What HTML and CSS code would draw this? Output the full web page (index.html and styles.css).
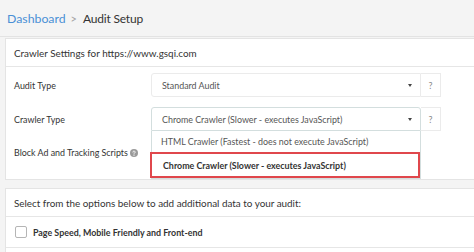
FILE: index.html
```html
<!DOCTYPE html>
<html lang="en">
<head>
    <meta charset="UTF-8">
    <meta name="viewport" content="width=device-width, initial-scale=1.0">
    <title>Audit Setup</title>
    <link rel="stylesheet" href="styles.css">
</head>
<body>
    <div class="topbar">
        <a class="crumb-link" href="#">Dashboard</a>
        <span class="crumb-sep">&gt;</span>
        <span class="crumb-current">Audit Setup</span>
    </div>

    <div class="content">

        <!-- Crawler settings -->
        <div class="panel">
            <div class="panel-heading">Crawler Settings for https://www.gsqi.com</div>
            <div class="panel-body">
                <div class="form-row">
                    <div class="form-label">Audit Type</div>
                    <div class="input-group">
                        <div class="select">Standard Audit<span class="caret"></span></div>
                        <div class="addon">?</div>
                    </div>
                </div>

                <div class="form-row">
                    <div class="form-label">Crawler Type</div>
                    <div class="input-group">
                        <div class="select select-open">Chrome Crawler (Slower - executes JavaScript)<span class="caret"></span>
                            <div class="dropdown">
                                <div class="option">HTML Crawler (Fastest - does not execute JavaScript)</div>
                                <div class="option option-selected">Chrome Crawler (Slower - executes JavaScript)</div>
                            </div>
                        </div>
                        <div class="addon">?</div>
                    </div>
                </div>

                <div class="form-row form-row-short">
                    <div class="form-label">Block Ad and Tracking Scripts
                        <svg class="help-icon" width="8" height="8" viewBox="0 0 16 16">
                            <circle cx="8" cy="8" r="8" fill="#9a9a9a"/>
                            <path d="M5.8 6.2a2.2 2.2 0 1 1 3.2 2c-.7.4-1 .8-1 1.5" fill="none" stroke="#fff" stroke-width="1.8" stroke-linecap="round"/>
                            <circle cx="8" cy="12.3" r="1.1" fill="#fff"/>
                        </svg>
                    </div>
                </div>
            </div>
        </div>

        <!-- Additional data -->
        <div class="panel">
            <div class="panel-heading">Select from the options below to add additional data to your audit:</div>
            <div class="check-row">
                <span class="checkbox"></span>
                <span class="check-label">Page Speed, Mobile Friendly and Front-end</span>
            </div>
            <div class="check-row"></div>
        </div>

    </div>
</body>
</html>
```

FILE: styles.css
```css
body {
    margin: 0;
    padding: 0;
    font-family: Lato, "Open Sans", sans-serif;
    font-size: 8.9px;
    color: #333;
    background: #f4f4f4;
    overflow: hidden;
}

.topbar {
    height: 36px;
    display: flex;
    align-items: center;
    padding-left: 7px;
    font-size: 12.3px;
    border-bottom: 1px solid #e3e3e3;
}

.crumb-link {
    color: #4a90d6;
    text-decoration: none;
}

.crumb-sep {
    color: #a3a3a3;
    font-size: 11px;
    margin: 0 6px 0 5px;
}

.crumb-current {
    color: #333;
    font-size: 12px;
    letter-spacing: -0.2px;
}

.content {
    padding: 1px 0 0 5px;
    display: flex;
    flex-direction: column;
    gap: 8px;
}

.panel {
    background: #fff;
    border: 1px solid #e4e4e4;
    margin-right: -20px;
}

.panel-heading {
    height: 27px;
    display: flex;
    align-items: center;
    padding-left: 8px;
    font-size: 9.9px;
    border-bottom: 1px solid #e6e6e6;
}

.panel-body {
    padding: 6px 8px 16px;
    display: flex;
    flex-direction: column;
    gap: 10px;
}

.form-row {
    height: 24px;
    display: flex;
    align-items: center;
}

.form-row-short {
    height: 22px;
}

.form-label {
    width: 137px;
    flex-shrink: 0;
    white-space: nowrap;
    display: flex;
    align-items: center;
    gap: 2px;
}

.help-icon {
    margin-top: 1px;
}

.input-group {
    display: flex;
    height: 24px;
}

.select {
    width: 258px;
    padding-left: 10px;
    display: flex;
    align-items: center;
    color: #555;
    border: 1px solid #ebebeb;
    border-radius: 3px 0 0 3px;
    position: relative;
}

.select-open {
    border-color: #d3dede;
    border-radius: 3px 3px 0 0;
}

.caret {
    position: absolute;
    right: 8px;
    top: 10px;
    border-left: 2.5px solid transparent;
    border-right: 2.5px solid transparent;
    border-top: 3px solid #444;
}

.addon {
    width: 19px;
    display: flex;
    align-items: center;
    justify-content: center;
    color: #888;
    border: 1px solid #ebebeb;
    border-left: none;
}

.dropdown {
    position: absolute;
    top: 23px;
    left: -1px;
    right: -1px;
    background: #fff;
    border: 1px solid #d3dede;
    border-top: none;
}

.option {
    height: 21px;
    display: flex;
    align-items: center;
    padding-left: 9px;
    color: #555;
}

.option-selected {
    height: 22px;
    margin-left: -2px;
    padding-left: 11px;
    border: 2px solid #e0474c;
    font-weight: bold;
    color: #333;
}

.check-row {
    height: 30px;
    display: flex;
    align-items: center;
    gap: 6px;
    padding-left: 9px;
    border-bottom: 1px solid #e6e6e6;
}

.checkbox {
    width: 10px;
    height: 10px;
    border: 1px solid #b5b5b5;
    border-radius: 2px;
}

.check-label {
    font-weight: bold;
    color: #333;
}
```
